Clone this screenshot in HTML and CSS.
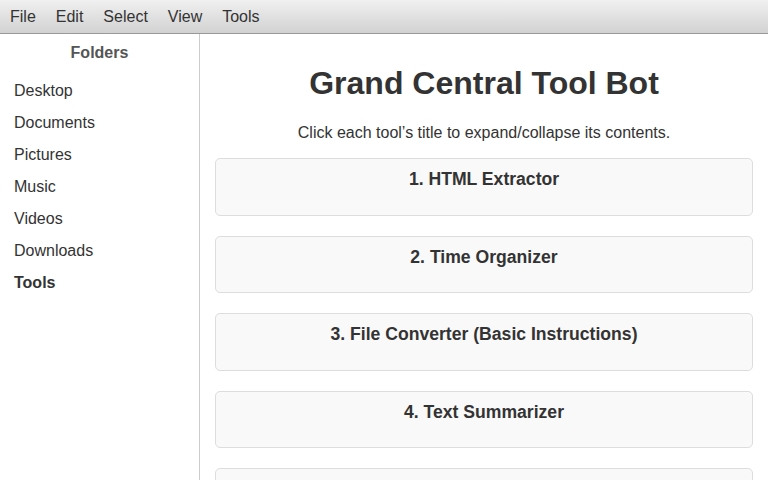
FILE: index.html
```html
<!DOCTYPE html>
<html lang="en">
<head>
    <meta charset="UTF-8">
    <meta name="viewport" content="width=device-width, initial-scale=1.0">
    <title>Grand Central Tool Bot</title>
    <link rel="stylesheet" href="styles.css">
</head>
<body>

<!-- Menu Bar -->
<div class="menubar">
    <span class="menu-item">File</span>
    <span class="menu-item">Edit</span>
    <span class="menu-item">Select</span>
    <span class="menu-item">View</span>
    <span class="menu-item">Tools</span>
</div>

<div class="layout">
    <!-- Sidebar -->
    <div class="sidebar">
        <div class="sidebar-title">Folders</div>
        <ul class="folders">
            <li>Desktop</li>
            <li>Documents</li>
            <li>Pictures</li>
            <li>Music</li>
            <li>Videos</li>
            <li>Downloads</li>
            <li class="active">Tools</li>
        </ul>
    </div>

    <!-- Main Content -->
    <div class="main">
        <h1>Grand Central Tool Bot</h1>
        <p class="intro">Click each tool’s title to expand/collapse its contents.</p>

        <div class="tool">
            <h2 class="tool-title">1. HTML Extractor</h2>
        </div>
        <div class="tool">
            <h2 class="tool-title">2. Time Organizer</h2>
        </div>
        <div class="tool">
            <h2 class="tool-title">3. File Converter (Basic Instructions)</h2>
        </div>
        <div class="tool">
            <h2 class="tool-title">4. Text Summarizer</h2>
        </div>
        <!-- next tool starts below the fold -->
        <div class="tool"></div>
    </div>
</div>

</body>
</html>
```

FILE: styles.css
```css
/* General Reset */
* {
    margin: 0;
    padding: 0;
    box-sizing: border-box;
}

body {
    font-family: 'Liberation Sans', Arial, sans-serif;
    color: #333;
    background-color: #fff;
    height: 100vh;
    overflow: hidden;
}

/* Menu Bar */
.menubar {
    height: 34px;
    display: flex;
    align-items: center;
    background: linear-gradient(#f0f0f0, #d2d2d2);
    border-bottom: 1px solid #999;
    font-size: 16px;
}

.menu-item {
    padding: 0 10px;
    color: #333;
    cursor: pointer;
}

/* Layout */
.layout {
    display: flex;
    height: calc(100vh - 34px);
}

/* Sidebar */
.sidebar {
    width: 200px;
    flex-shrink: 0;
    border-right: 1px solid #ccc;
    padding: 10px 14px;
}

.sidebar-title {
    font-weight: bold;
    color: #555;
    text-align: center;
    margin-bottom: 20px;
}

.folders {
    list-style: none;
}

.folders li {
    height: 32px;
    line-height: 18px;
    color: #333;
    cursor: pointer;
}

.folders li.active {
    font-weight: bold;
}

/* Main */
.main {
    flex: 1;
    padding: 31px 15px 0;
    overflow: hidden;
}

h1 {
    text-align: center;
    font-size: 32px;
    line-height: 37px;
    margin-bottom: 22px;
}

.intro {
    text-align: center;
    font-size: 16px;
    line-height: 18px;
    margin-bottom: 16px;
}

.tool {
    background-color: #f9f9f9;
    border: 1px solid #ddd;
    border-radius: 5px;
    height: 57.5px;
    padding: 10px;
    margin-bottom: 20px;
}

.tool-title {
    font-size: 1.1em;
    line-height: 21px;
    text-align: center;
    cursor: pointer;
}
```
